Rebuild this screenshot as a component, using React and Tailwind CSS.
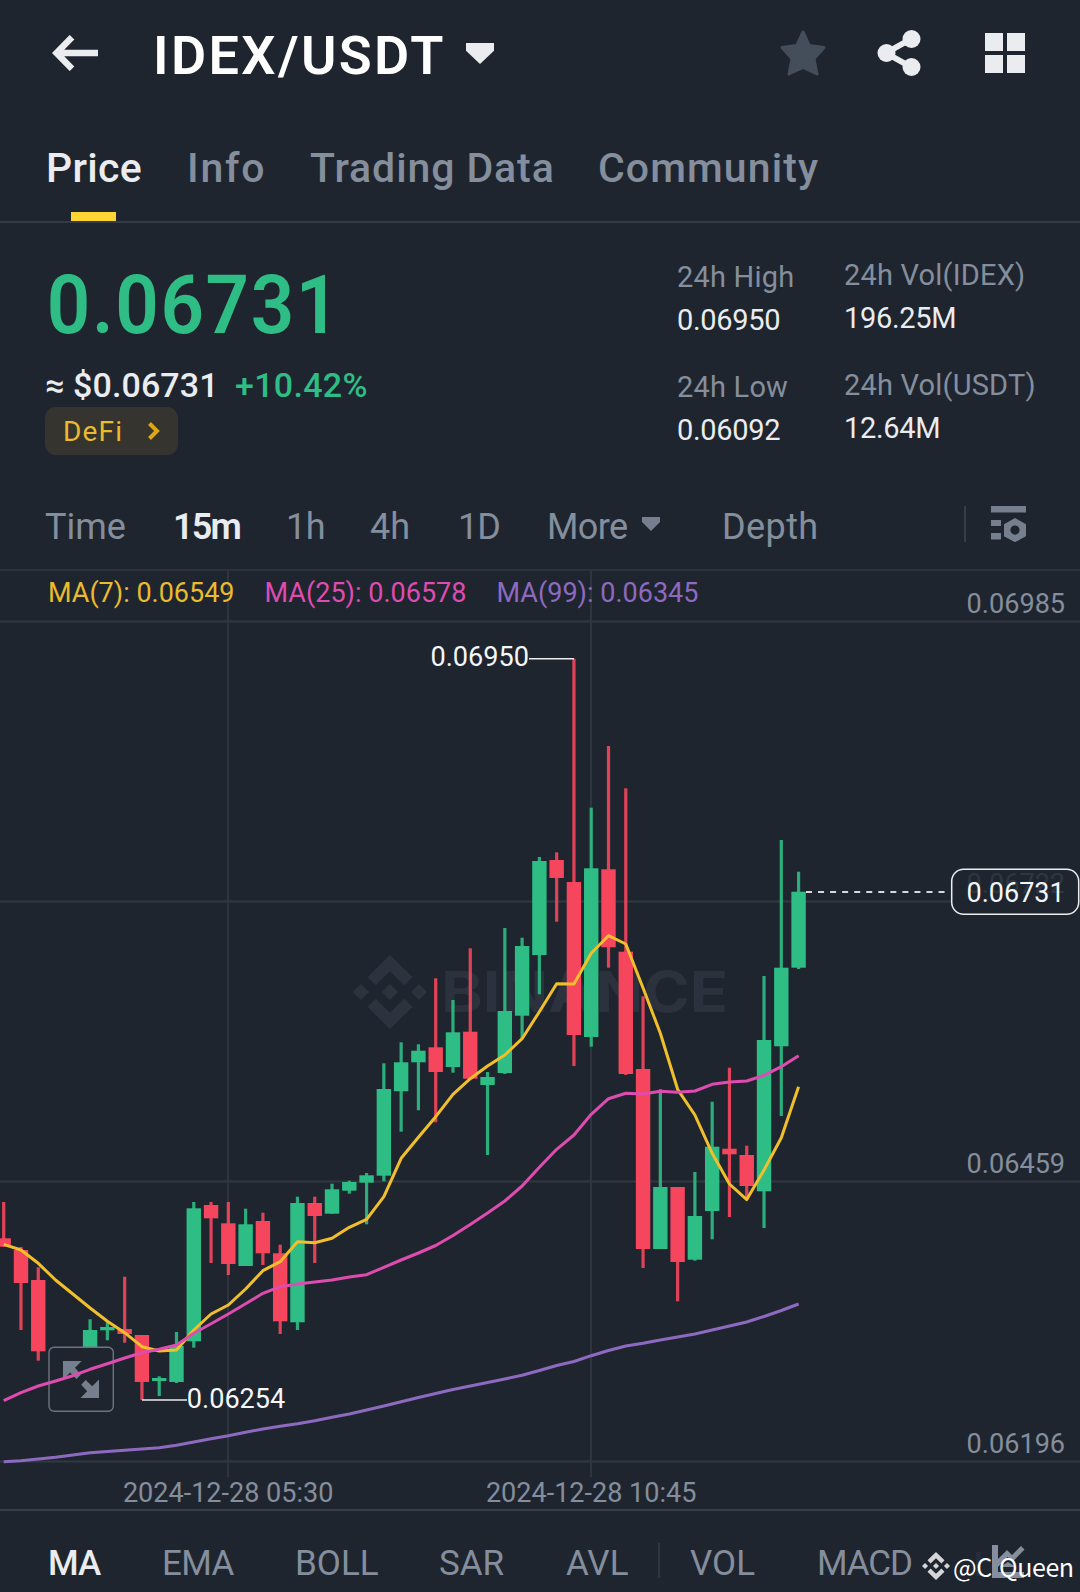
import React from 'react';
import clsx from 'clsx';

const STEP = 17.28;
const FIRST_X = 3.7;
const TOP = 571;
const xAt = (i) => FIRST_X + i * STEP;

// [index, color, high, bodyTop, bodyBottom, low]
const candles = [
  [0, 'r', 1202, 1238.3, 1246.7, 1246.7],
  [1, 'r', 1247, 1250, 1283, 1330],
  [2, 'r', 1267.3, 1280, 1351.3, 1360.7],
  [5, 'g', 1319.3, 1330, 1352, 1352],
  [6, 'g', 1322.3, 1327, 1330.3, 1340.3],
  [7, 'r', 1276.7, 1329, 1334, 1342.7],
  [8, 'r', 1335, 1335, 1382, 1400],
  [9, 'g', 1376.3, 1378, 1381, 1396],
  [10, 'g', 1332, 1346, 1382, 1383],
  [11, 'g', 1202, 1208.3, 1341.3, 1347.7],
  [12, 'r', 1202, 1205, 1218.3, 1263],
  [13, 'r', 1202, 1223.3, 1264, 1275],
  [14, 'g', 1208.7, 1224.3, 1266, 1266],
  [15, 'r', 1212.7, 1221, 1253.3, 1265],
  [16, 'r', 1244.7, 1253.3, 1321.3, 1334],
  [17, 'g', 1196.7, 1203, 1322.3, 1330],
  [18, 'r', 1196.7, 1203, 1216, 1263],
  [19, 'g', 1183.7, 1189.3, 1213.7, 1213.7],
  [20, 'g', 1180.7, 1182, 1190.7, 1193.7],
  [21, 'g', 1173, 1175.3, 1182.7, 1224.3],
  [22, 'g', 1063.3, 1089, 1175.7, 1181.3],
  [23, 'g', 1042.3, 1062.3, 1091.3, 1131.7],
  [24, 'g', 1044.3, 1050.7, 1062.3, 1110.3],
  [25, 'r', 978.3, 1047.3, 1072, 1122.3],
  [26, 'g', 1000, 1032.3, 1067, 1072.7],
  [27, 'r', 948.3, 1031.7, 1078.7, 1078.7],
  [28, 'g', 1072, 1077, 1085, 1155],
  [29, 'g', 928, 1011, 1073, 1074],
  [30, 'g', 937.7, 946, 1015.7, 1038],
  [31, 'g', 857, 861, 955, 994.3],
  [32, 'r', 852.3, 860, 878, 921.7],
  [33, 'r', 658.7, 882, 1035, 1066],
  [34, 'g', 807.7, 868.3, 1037, 1046.7],
  [35, 'r', 746, 869.3, 947.3, 967.7],
  [36, 'r', 788.3, 951.7, 1074, 1075],
  [37, 'r', 996.3, 1069, 1249, 1268],
  [38, 'g', 1089.3, 1187, 1249, 1249],
  [39, 'r', 1187, 1187, 1262, 1301.3],
  [40, 'g', 1172, 1216, 1259.7, 1260.7],
  [41, 'g', 1101.7, 1146.7, 1211, 1239.3],
  [42, 'r', 1067.7, 1148.7, 1154.3, 1217],
  [43, 'r', 1145.7, 1155, 1186, 1200],
  [44, 'g', 976, 1040, 1191.3, 1228],
  [45, 'g', 840, 967.7, 1046.3, 1116],
  [46, 'g', 871.7, 891.7, 967.7, 969],
];

const ma7 = [
  1244.3, 1250, 1263.3, 1280, 1294, 1308, 1321.3, 1332.7, 1346.7, 1351, 1350, 1330, 1314, 1305, 1289,
  1270.7, 1261.7, 1241.7, 1242.7, 1238.3, 1227.3, 1219.3, 1196.7, 1158.3, 1137.3, 1116.7, 1094.3,
  1078.7, 1066, 1055, 1038.7, 1011.7, 983.7, 984, 953.3, 935.7, 944, 988, 1033.3, 1089.3, 1115,
  1153.3, 1184, 1199.6, 1170, 1137.7, 1086.7,
];

const ma25 = [
  1400.7, 1392.7, 1386, 1381, 1375.7, 1369.3, 1363.7, 1358, 1352.7, 1349.3, 1345, 1333.3, 1323.7, 1314,
  1303.7, 1293.3, 1286.7, 1284, 1282, 1280, 1277, 1274.7, 1267.3, 1260, 1253, 1245.5, 1235.5, 1224.5,
  1213, 1201, 1186, 1167.3, 1149.3, 1135, 1114.3, 1098.7, 1093.3, 1094, 1091.3, 1092.3, 1091, 1084.3,
  1082, 1081, 1075.3, 1066.7, 1055.7,
];

const ma99 = [
  1461.7, 1460.7, 1459, 1457.3, 1455, 1452.8, 1451.5, 1450.3, 1449, 1447.8, 1445.3, 1442, 1438.7, 1435.7,
  1432.3, 1429, 1426.3, 1423.7, 1420.7, 1417.3, 1414, 1410, 1406, 1401.7, 1397.5, 1393.5, 1389.5, 1386,
  1382.5, 1379, 1375.3, 1370.5, 1365.5, 1361.5, 1355.7, 1350.5, 1346, 1343.3, 1340, 1337, 1334, 1330,
  1326, 1322, 1316.5, 1310.5, 1304,
];

const toPoints = (values) => values.map((y, i) => `${xAt(i)},${y}`).join(' ');

const tabs = [
  { name: 'Price', className: 'tracking-[0.3px] text-[#eaecef]' },
  { name: 'Info', className: 'tracking-[1.8px] text-[#848e9c]' },
  { name: 'Trading Data', className: 'tracking-[0.9px] text-[#848e9c]' },
  { name: 'Community', className: 'tracking-[1.1px] text-[#848e9c]' },
];

const stats = [
  { label: '24h High', value: '0.06950' },
  { label: '24h Low', value: '0.06092' },
];

const volumes = [
  { label: '24h Vol(IDEX)', value: '196.25M' },
  { label: '24h Vol(USDT)', value: '12.64M' },
];

function Caret({ className }) {
  return (
    <svg viewBox="0 0 28 22" className={className} fill="currentColor" preserveAspectRatio="none">
      <path d="M0 0h28v8L14 22 0 8z" />
    </svg>
  );
}

function BinanceMark({ className }) {
  return (
    <svg viewBox="0 0 74 74" className={className} fill="currentColor">
      <path d="M37 0l22.5 22-8.2 8.2L37 16.2 22.7 30.2l-8.2-8.2z" />
      <path d="M37 74l22.5-22-8.2-8.2L37 57.8 22.7 43.8l-8.2 8.2z" />
      <path d="M8 29l8 8-8 8-8-8zM66 29l8 8-8 8-8-8zM37 29l8 8-8 8-8-8z" />
    </svg>
  );
}

function Header() {
  return (
    <header className="flex h-[106px] items-center pl-[52px] pr-[55px]">
      <svg viewBox="0 0 46 36" className="h-9 w-[46px] text-[#eaecef]" fill="none" stroke="currentColor" strokeWidth="6.5">
        <path d="M46 18H5M20 2.2L4.5 18 20 33.8" />
      </svg>
      <h1 className="ml-[55px] w-[313px] whitespace-nowrap pt-[5px] text-[54px] font-semibold leading-none tracking-[2.4px] text-white">
        IDEX/USDT
      </h1>
      <Caret className="h-[21px] w-7 text-[#eaecef]" />
      <div className="ml-auto flex items-center">
        <svg viewBox="0 0 46 46" className="h-[46px] w-[46px] text-[#444d5a]" fill="currentColor" stroke="currentColor" strokeWidth="3" strokeLinejoin="round">
          <path d="M23 2l6.3 13.6L44 17.6 34 28.8 37 44 23 37.4 9 44l3-15.2L2 17.6l14.7-2z" />
        </svg>
        <svg viewBox="0 0 44 46" className="ml-[51px] h-[46px] w-11 text-[#eaecef]" fill="currentColor">
          <path d="M34 9L9 23l25 14" fill="none" stroke="currentColor" strokeWidth="6" />
          <circle cx="34.5" cy="9" r="9" />
          <circle cx="9.5" cy="23" r="9" />
          <circle cx="34.5" cy="37" r="9" />
        </svg>
        <div className="ml-[64px] grid grid-cols-2 gap-1">
          {[0, 1, 2, 3].map((n) => (
            <span key={n} className="h-[18px] w-[18px] bg-[#eaecef]" />
          ))}
        </div>
      </div>
    </header>
  );
}

function Tabs() {
  return (
    <nav className="grid h-[117px] grid-cols-[141px_123px_288px_1fr] border-b-2 border-[#343b47] pl-[46px] pt-8 text-[41px] font-medium leading-[60px]">
      {tabs.map((tab, i) => (
        <div key={tab.name} className="whitespace-nowrap">
          <span className={tab.className}>{tab.name}</span>
          {i === 0 && <div className="ml-[25px] mt-[14px] h-[9px] w-[45px] bg-[#fcd535]" />}
        </div>
      ))}
    </nav>
  );
}

function StatColumn({ items, className }) {
  return (
    <div className={clsx('flex flex-col whitespace-nowrap text-[29px] leading-10', className)}>
      {items.map((item) => (
        <div key={item.label}>
          <div className="tracking-[0.2px] text-[#848e9c]">{item.label}</div>
          <div className="mt-[3px] tracking-[-0.3px] text-[#eaecef]">{item.value}</div>
        </div>
      ))}
    </div>
  );
}

function Summary() {
  return (
    <section className="flex h-[263px]">
      <div className="w-[677px] pl-[45px] pt-[42px]">
        <div className="w-[320px] origin-left scale-x-[0.93] pl-[2px] text-[82px] font-semibold leading-[80px] tracking-[1.7px] text-[#2ebd85]">
          0.06731
        </div>
        <div className="mt-5 flex whitespace-nowrap text-[34px] font-medium leading-10 tracking-[0.3px]">
          <span className="w-[190px] tracking-[0.1px] text-[#eaecef]">≈ $0.06731</span>
          <span className="text-[#2ebd85]">+10.42%</span>
        </div>
        <button className="mt-[2px] flex h-12 w-[133px] items-center rounded-[11px] bg-[#35342e] pl-[18px] text-[28px] leading-none text-[#e9bb2d]">
          <span className="w-[85px] pt-[2px] text-left tracking-[1.2px]">DeFi</span>
          <svg viewBox="0 0 12 18" className="h-[18px] w-3 text-[#dfa713]" fill="none" stroke="currentColor" strokeWidth="4">
            <path d="M1.5 1.5L9 9l-7.5 7.5" />
          </svg>
        </button>
      </div>
      <div className="w-[167px] pt-[34px]">
        <StatColumn items={stats} className="gap-[27px]" />
      </div>
      <div className="pt-8">
        <StatColumn items={volumes} className="gap-[27px]" />
      </div>
    </section>
  );
}

function IntervalBar() {
  return (
    <div className="grid h-[85px] grid-cols-[128px_113px_84px_88px_89px_95px_80px_242px_27px_1fr] items-center whitespace-nowrap border-b-2 border-[#2b323d] pb-[2px] pl-[45px] text-[36px] text-[#848e9c]">
      <span>Time</span>
      <span className="font-semibold tracking-[-1.8px] text-[#eaecef]">15m</span>
      <span className="tracking-[-0.5px]">1h</span>
      <span>4h</span>
      <span className="tracking-[-1px]">1D</span>
      <span className="tracking-[-0.6px]">More</span>
      <Caret className="mb-[5px] h-[14px] w-[18px] text-[#767f8d]" />
      <span className="tracking-[0.4px]">Depth</span>
      <i className="mb-[5px] block h-9 w-[2px] bg-[#363d49]" />
      <svg viewBox="0 0 35 36" className="mb-[5px] h-9 w-[35px] text-[#767f8d]" fill="currentColor">
        <path d="M0 0h35v6.5H0zM0 14h10v6H0zM0 27h10v6.5H0z" />
        <path fillRule="evenodd" d="M24 12l11 6.2v12L24 36.2l-11-6v-12zM24 19.5a4.6 4.6 0 100 9.2 4.6 4.6 0 000-9.2z" />
      </svg>
    </div>
  );
}

function ChartText({ x, y, width, fill = '#848e9c', children }) {
  return (
    <text x={x} y={y} textLength={width} lengthAdjust="spacingAndGlyphs" fill={fill} fontSize="27.7">
      {children}
    </text>
  );
}

function Chart() {
  return (
    <svg viewBox={`0 ${TOP} 1080 938`} className="block h-[938px] w-full">
      {/* Watermark */}
      <svg x="353" y="955" width="74" height="74" viewBox="0 0 74 74">
        <BinanceMark className="text-[#2d333e]" />
      </svg>
      <text x="441" y="1012" fontSize="56" fontWeight="700" textLength="287" lengthAdjust="spacingAndGlyphs" fill="#2c323d" className="font-['Inter',sans-serif]">
        BINANCE
      </text>

      {/* Grid */}
      <g stroke="#313843" strokeWidth="1.8">
        {[621.5, 901.5, 1181.5, 1461.5].map((y) => (
          <line key={y} x1="0" x2="1080" y1={y} y2={y} />
        ))}
        {[228, 591].map((x) => (
          <line key={x} x1={x} x2={x} y1={TOP} y2="1477" />
        ))}
      </g>

      {/* Candles */}
      {candles.map(([i, color, high, top, bottom, low]) => (
        <g key={i} fill={color === 'g' ? '#2ebd85' : '#f6465d'}>
          <rect x={xAt(i) - 1.6} y={high} width="3.2" height={low - high} opacity="0.9" />
          <rect x={xAt(i) - 7.2} y={top} width="14.4" height={bottom - top} />
        </g>
      ))}

      {/* Fullscreen button */}
      <rect x="49" y="1347.3" width="64.3" height="64" rx="5" fill="#1f252f" stroke="#6b7483" strokeWidth="1.4" />
      <g fill="#767f8d">
        <path d="M63 1361h18.7l-6.7 6.7 6 6.8-4.5 4.5-6.5-6.5L63 1380z" />
        <path d="M99 1398H80.5l6.7-6.7-6-6.5 4.5-4.8 6.5 6.3L99 1379.5z" />
      </g>

      {/* Moving averages */}
      <g fill="none" strokeWidth="3" strokeLinejoin="round">
        <polyline points={toPoints(ma99)} stroke="#8d6ac0" />
        <polyline points={toPoints(ma7)} stroke="#f0bf2b" />
        <polyline points={toPoints(ma25)} stroke="#df4cb0" />
      </g>

      <ChartText x="48" y="602" width="186.5" fill="#e9bb2d">MA(7): 0.06549</ChartText>
      <ChartText x="264.5" y="602" width="202" fill="#df4cb0">MA(25): 0.06578</ChartText>
      <ChartText x="496.5" y="602" width="202" fill="#8d6ac0">MA(99): 0.06345</ChartText>

      {/* High and low callouts */}
      <path d="M529 658.7h45M142 1400h45" stroke="#eaecef" strokeWidth="1.6" />
      <ChartText x="430.5" y="666" width="98.5" fill="#f5f6f8">0.06950</ChartText>
      <ChartText x="186.8" y="1407.7" width="98.5" fill="#f5f6f8">0.06254</ChartText>

      {/* Price axis */}
      <ChartText x="966.6" y="612.7" width="98.5">0.06985</ChartText>
      <ChartText x="966.6" y="1172.7" width="98.5">0.06459</ChartText>
      <ChartText x="966.6" y="1452.7" width="98.5">0.06196</ChartText>

      {/* Last price */}
      <line x1="806" x2="945" y1="892" y2="892" stroke="#d5d8dd" strokeWidth="1.8" strokeDasharray="6 6.05" />
      <rect x="951.7" y="869.3" width="127" height="45" rx="12" fill="#1f252f" stroke="#eaecef" strokeWidth="1.5" />
      <ChartText x="966.6" y="892.7" width="98.5" fill="#2f3641">0.06722</ChartText>
      <ChartText x="966.6" y="901.8" width="98" fill="#f5f6f8">0.06731</ChartText>

      {/* Time axis */}
      <ChartText x="122.9" y="1502" width="210.5">2024-12-28 05:30</ChartText>
      <ChartText x="485.9" y="1502" width="210.5">2024-12-28 10:45</ChartText>
    </svg>
  );
}

function IndicatorBar() {
  return (
    <footer className="relative h-[83px] border-t-2 border-[#363d49]">
      <div className="grid grid-cols-[114px_133px_143px_128px_92px_32px_127px_159px_16px_1fr] items-center whitespace-nowrap pl-[48px] pt-[31px] text-[35px] leading-[44px] text-[#848e9c]">
        <span className="font-medium tracking-[-0.8px] text-[#eaecef]">MA</span>
        <span className="tracking-[-0.6px]">EMA</span>
        <span>BOLL</span>
        <span className="pl-[1px]">SAR</span>
        <span>AVL</span>
        <i className="mb-[8px] block h-[35px] w-[2px] bg-[#303742]" />
        <span>VOL</span>
        <span className="tracking-[-1.1px]">MACD</span>
        <i className="block h-6 w-[5px] bg-[#272d38]" />
        <svg viewBox="0 0 34 33" className="mb-[6px] h-[33px] w-[34px] text-[#848e9c]" fill="currentColor">
          <path d="M0 0h6v27h26v6H0z" />
          <path d="M6 14l9-9 5 5 9-9 3.5 3.5L20.5 17l-5-5L6 22z" />
          <path d="M8 22h16l-8-5z" />
        </svg>
      </div>
      <div className="absolute left-[922px] top-[39px] flex items-center whitespace-nowrap font-['Noto_Sans_CJK_SC','Noto_Sans',sans-serif] text-[25px] leading-8 text-white">
        <BinanceMark className="mr-[3px] h-7 w-7 text-[#d5d6d9]" />
        <span className="tracking-[-0.4px] [word-spacing:2px]">@C Queen</span>
      </div>
    </footer>
  );
}

export default function App() {
  return (
    <div className="flex h-[1592px] w-[1080px] flex-col overflow-hidden bg-[#1f252f] font-['Roboto','Liberation_Sans',sans-serif]">
      <Header />
      <Tabs />
      <Summary />
      <IntervalBar />
      <Chart />
      <IndicatorBar />
    </div>
  );
}
